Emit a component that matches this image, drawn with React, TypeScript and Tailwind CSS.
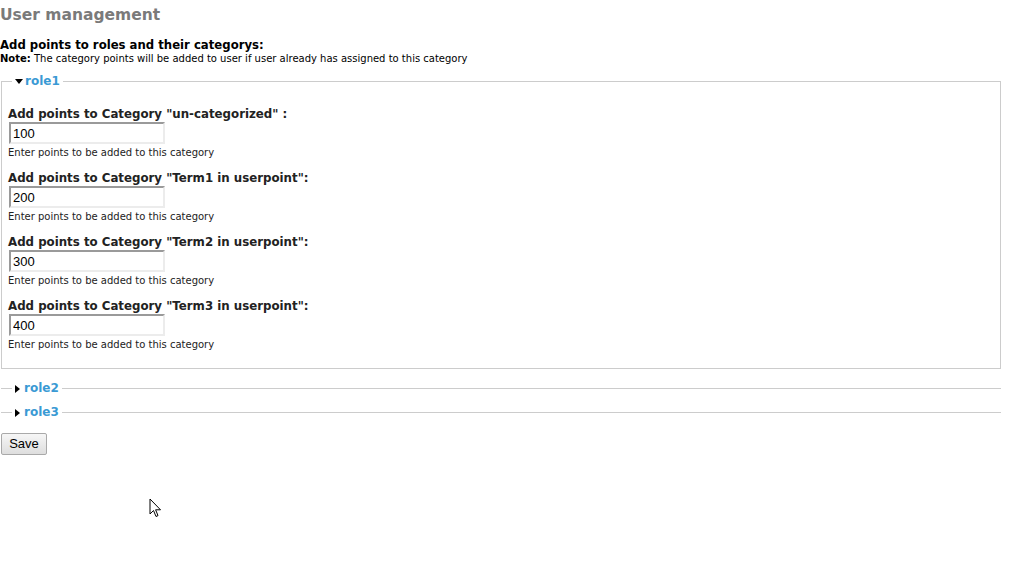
import React from 'react';

const categories = [
  { label: 'Add points to Category "un-categorized" :', value: '100' },
  { label: 'Add points to Category "Term1 in userpoint":', value: '200' },
  { label: 'Add points to Category "Term2 in userpoint":', value: '300' },
  { label: 'Add points to Category "Term3 in userpoint":', value: '400' },
];

function Arrow({ open }: { open: boolean }) {
  return open ? (
    <svg width="8" height="5" viewBox="0 0 8 5" className="mr-[2px] inline-block">
      <path d="M0 0 H8 L4 5 Z" fill="#000" />
    </svg>
  ) : (
    <svg width="5" height="8" viewBox="0 0 5 8" className="mr-[4px] inline-block">
      <path d="M0 0 V8 L5 4 Z" fill="#000" />
    </svg>
  );
}

function App() {
  return (
    <div className="relative min-h-[579px] bg-white text-black" style={{ fontFamily: '"DejaVu Sans", Verdana, sans-serif' }}>
      <h1 className="pt-[4px] text-[15.5px] leading-[22px] font-bold text-[#7a7a7a]">User management</h1>

      <div className="mt-[12px]">
        <div className="text-[11.7px] leading-[15px] font-bold">Add points to roles and their categorys:</div>
        <div className="text-[10px] leading-[12px]">
          <span className="font-bold">Note:</span> The category points will be added to user if user already has assigned to this category
        </div>
      </div>

      <fieldset className="mt-[9px] ml-[1px] w-[1000px] border border-[#cccccc] px-[6px] pb-[5px]">
        <legend className="ml-[4px] flex items-center px-[3px] text-[12px] leading-[15px] font-bold text-[#3a9ad4]">
          <Arrow open />
          role1
        </legend>
        <div className="pt-[18px]">
          {categories.map((c) => (
            <div key={c.value} className="mb-[12px]">
              <label className="block text-[11.8px] leading-[15px] font-bold text-[#222]">{c.label}</label>
              <input
                type="text"
                defaultValue={c.value}
                className="ml-[1px] block h-[22px] w-[156px] border-2 border-t-[#9a9a9a] border-l-[#9a9a9a] border-b-[#ececec] border-r-[#ececec] bg-white px-[2px] text-[13px] text-black outline-none"
                style={{ fontFamily: '"Liberation Sans", Arial, sans-serif' }}
              />
              <div className="mt-[2px] text-[10px] leading-[13px] text-[#222]">Enter points to be added to this category</div>
            </div>
          ))}
        </div>
      </fieldset>

      <fieldset className="mt-[12px] ml-[1px] w-[1000px] border-t border-[#cccccc]">
        <legend className="ml-[11px] flex items-center px-[3px] text-[12px] leading-[15px] font-bold text-[#3a9ad4]">
          <Arrow open={false} />
          role2
        </legend>
      </fieldset>
      <fieldset className="mt-[9px] ml-[1px] w-[1000px] border-t border-[#cccccc]">
        <legend className="ml-[11px] flex items-center px-[3px] text-[12px] leading-[15px] font-bold text-[#3a9ad4]">
          <Arrow open={false} />
          role3
        </legend>
      </fieldset>

      <button
        className="mt-[13px] ml-[1px] h-[22px] w-[46px] rounded-[2px] border border-[#a9a9a9] bg-gradient-to-b from-[#f6f6f6] to-[#dedede] text-[13px] text-black"
        style={{ fontFamily: '"Liberation Sans", Arial, sans-serif' }}
      >
        Save
      </button>

      <svg width="13" height="20" viewBox="0 0 13 20" className="absolute left-[149px] top-[498px]">
        <path d="M1 1 L1 16 L4.5 12.5 L7 18.5 L9 17.6 L6.6 11.8 L11.5 11.8 Z" fill="#fff" stroke="#000" strokeWidth="1" strokeLinejoin="round" />
      </svg>
    </div>
  );
}

export default App;
